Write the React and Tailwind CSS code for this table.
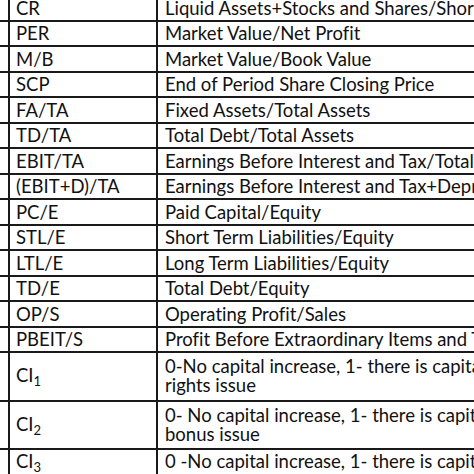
const rows = [
  ["CR", "Liquid Assets+Stocks and Shares/Short Term Liabilities"],
  ["PER", "Market Value/Net Profit"],
  ["M/B", "Market Value/Book Value"],
  ["SCP", "End of Period Share Closing Price"],
  ["FA/TA", "Fixed Assets/Total Assets"],
  ["TD/TA", "Total Debt/Total Assets"],
  ["EBIT/TA", "Earnings Before Interest and Tax/Total Assets"],
  ["(EBIT+D)/TA", "Earnings Before Interest and Tax+Depreciation/Total Assets"],
  ["PC/E", "Paid Capital/Equity"],
  ["STL/E", "Short Term Liabilities/Equity"],
  ["LTL/E", "Long Term Liabilities/Equity"],
  ["TD/E", "Total Debt/Equity"],
  ["OP/S", "Operating Profit/Sales"],
  ["PBEIT/S", "Profit Before Extraordinary Items and Tax/Sales"],
]

const ciRows = [
  ["1", "0-No capital increase, 1- there is capital increase through", "rights issue"],
  ["2", "0- No capital increase, 1- there is capital increase through", "bonus issue"],
  ["3", "0 -No capital increase, 1- there is capital increase through cash issue"],
]

function Row({ tall, left, children }) {
  return (
    <div className={`flex border-b-2 border-[#1a1a1a] ${tall ? "h-[48.5px]" : "h-[25.5px]"}`}>
      <div className="w-[10px] shrink-0 border-r-2 border-[#1a1a1a]"></div>
      <div className="w-[148px] shrink-0 border-r-2 border-[#1a1a1a] flex items-center pl-[6px] whitespace-nowrap">{left}</div>
      <div className="flex-1 flex flex-col justify-center pl-[7px] whitespace-nowrap overflow-hidden">{children}</div>
    </div>
  )
}

export default function App() {
  return (
    <div className="w-[474px] h-[474px] overflow-hidden bg-white text-[#111] text-[18.5px] leading-[22px] [font-variant-ligatures:none] font-['Lato',sans-serif]">
      <div className="-mt-[4px]">
        {rows.map(([a, b]) => (
          <Row key={a} left={a}>{b}</Row>
        ))}
        {ciRows.map(([n, l1, l2]) => (
          <Row key={n} tall={!!l2} left={<span>CI<span className="text-[13px] relative top-[4px]">{n}</span></span>}>
            <div className="leading-[19px]">{l1}</div>
            {l2 && <div className="leading-[19px]">{l2}</div>}
          </Row>
        ))}
      </div>
    </div>
  )
}
